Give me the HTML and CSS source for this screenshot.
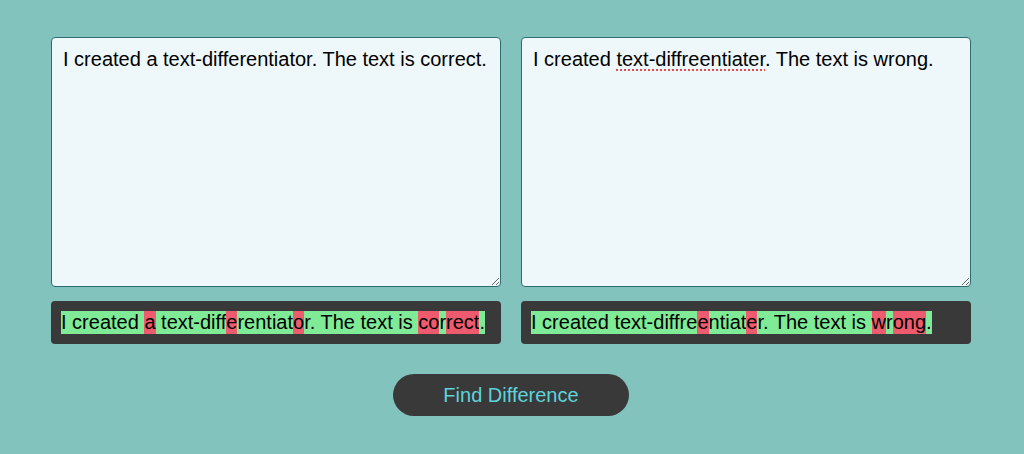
FILE: index.html
```html
<!DOCTYPE html>
<html lang="en">
<head>
    <meta charset="UTF-8">
    <meta name="viewport" content="width=device-width, initial-scale=1.0">
    <title>Text Differentiator</title>
    <link rel="stylesheet" href="styles.css">
</head>
<body>
    <div class="container">
        <div class="column">
            <div class="text-input" contenteditable="true" spellcheck="false">I created a text-differentiator. The text is correct.</div>
            <div class="result"><span class="same">I created </span><span class="diff">a</span><span class="same"> text-diff</span><span class="diff">e</span><span class="same">rentiat</span><span class="diff">o</span><span class="same">r. The text is </span><span class="diff">co</span><span class="same">r</span><span class="diff">rect</span><span class="same">.</span></div>
        </div>
        <div class="column">
            <div class="text-input" contenteditable="true" spellcheck="false">I created <span class="misspelled">text-diffreentiater</span>. The text is wrong.</div>
            <div class="result"><span class="same">I created text-diffre</span><span class="diff">e</span><span class="same">ntiat</span><span class="diff">e</span><span class="same">r. The text is </span><span class="diff">w</span><span class="same">r</span><span class="diff">ong</span><span class="same">.</span></div>
        </div>
    </div>
    <div class="actions">
        <button class="find-btn">Find Difference</button>
    </div>
</body>
</html>
```

FILE: styles.css
```css
body {
    margin: 0;
    background: #83c3bd;
    font-family: 'Liberation Sans', Arial, sans-serif;
    font-size: 20px;
    color: #000;
}
.container {
    width: 920px;
    margin: 37px 0 0 51px;
    display: flex;
    gap: 20px;
}
.column {
    flex: 1;
    display: flex;
    flex-direction: column;
    gap: 14px;
}
.text-input {
    height: 250px;
    box-sizing: border-box;
    padding: 10px 11px;
    background: #eef7f9;
    border: 1px solid #2e6b73;
    border-radius: 4px;
    line-height: 23px;
    resize: both;
    overflow: auto;
    outline: none;
}
.misspelled {
    text-decoration: underline dotted #e8494f;
    text-decoration-thickness: 2px;
    text-underline-offset: 3px;
}
.result {
    height: 43px;
    box-sizing: border-box;
    background: #393939;
    border-radius: 4px;
    padding: 10px;
    line-height: 23px;
    white-space: nowrap;
}
.result span {
    display: inline-block;
    line-height: 23px;
    white-space: pre;
}
.same {
    background: #7feb97;
}
.diff {
    background: #ee5b6e;
}
.actions {
    display: flex;
    justify-content: center;
    margin-top: 30px;
}
.find-btn {
    width: 236px;
    height: 42px;
    background: #393939;
    color: #5dd3dc;
    border: none;
    border-radius: 21px;
    font-family: 'Liberation Sans', Arial, sans-serif;
    font-size: 20px;
    cursor: pointer;
    margin-right: 2px;
}
```
